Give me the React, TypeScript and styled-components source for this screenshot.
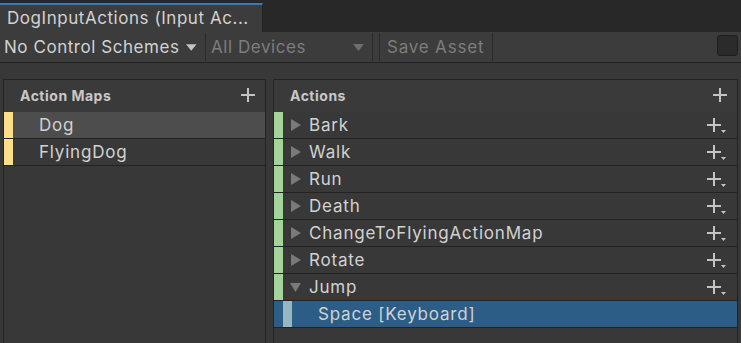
import React from "react";
import styled, { createGlobalStyle } from "styled-components";

const GlobalStyle = createGlobalStyle`
  html, body {
    margin: 0;
    padding: 0;
    background: #383838;
  }
  body {
    font-family: Inter, "Noto Sans", sans-serif;
    color: #d2d2d2;
  }
`;

const actions = [
  { name: "Bark", open: false },
  { name: "Walk", open: false },
  { name: "Run", open: false },
  { name: "Death", open: false },
  { name: "ChangeToFlyingActionMap", open: false },
  { name: "Rotate", open: false },
  { name: "Jump", open: true },
];

const maps = [
  { name: "Dog", selected: true },
  { name: "FlyingDog", selected: false },
];

const Plus = ({ size = 14 }: { size?: number }) => (
  <svg width={size} height={size} viewBox="0 0 14 14">
    <rect x="6" y="0" width="2" height="14" fill="#c4c4c4" />
    <rect x="0" y="6" width="14" height="2" fill="#c4c4c4" />
  </svg>
);

const PlusMore = () => (
  <svg width="20" height="18" viewBox="0 0 20 18">
    <rect x="6" y="1" width="2" height="14" fill="#c4c4c4" />
    <rect x="0" y="7" width="14" height="2" fill="#c4c4c4" />
    <polygon points="14,13 19,13 16.5,16" fill="#c4c4c4" />
  </svg>
);

const Arrow = ({ open }: { open: boolean }) => (
  <svg width="12" height="12" viewBox="0 0 12 12">
    {open ? (
      <polygon points="0,2 11,2 5.5,11" fill="#7a7a7a" />
    ) : (
      <polygon points="1,0 11,6 1,12" fill="#7a7a7a" />
    )}
  </svg>
);

const Caret = ({ dim }: { dim?: boolean }) => (
  <svg width="11" height="7" viewBox="0 0 11 7">
    <polygon points="0,0 11,0 5.5,7" fill={dim ? "#6e6e6e" : "#c4c4c4"} />
  </svg>
);

const App = () => {
  return (
    <>
      <GlobalStyle />
      <Window>
        <TabBar>
          <Tab>DogInputActions (Input Ac...</Tab>
        </TabBar>
        <Toolbar>
          <ToolDrop $width={205}>
            No Control Schemes
            <Caret />
          </ToolDrop>
          <Sep />
          <ToolDrop $width={166} $dim $spread>
            All Devices
            <Caret dim />
          </ToolDrop>
          <Sep />
          <ToolGap />
          <Sep />
          <ToolButton>Save Asset</ToolButton>
          <Sep />
          <Spacer />
          <Check />
        </Toolbar>
        <Content>
          <Panel $width={263}>
            <PanelHeader>
              <span>Action Maps</span>
              <Plus />
            </PanelHeader>
            {maps.map((m) => (
              <Row key={m.name} $selected={m.selected}>
                <Bar $color="#fddf8a" />
                <RowLabel $indent={26}>{m.name}</RowLabel>
              </Row>
            ))}
          </Panel>
          <Panel $width={465}>
            <PanelHeader>
              <span>Actions</span>
              <Plus />
            </PanelHeader>
            {actions.map((a) => (
              <Row key={a.name}>
                <Bar $color="#a5d49a" />
                <Fold>
                  <Arrow open={a.open} />
                </Fold>
                <RowLabel $indent={2}>{a.name}</RowLabel>
                <RowAdd>
                  <PlusMore />
                </RowAdd>
              </Row>
            ))}
            <Row $blue>
              <Bar $color="transparent" />
              <Bar $color="#97b8c0" />
              <RowLabel $indent={26}>Space [Keyboard]</RowLabel>
            </Row>
          </Panel>
        </Content>
      </Window>
    </>
  );
};

const Window = styled.div`
  width: 741px;
  height: 343px;
  overflow: hidden;
  display: flex;
  flex-direction: column;
  background: #383838;
`;

const TabBar = styled.div`
  height: 32px;
  background: #282828;
  display: flex;
  align-items: flex-end;
  flex-shrink: 0;
`;

const Tab = styled.div`
  width: 263px;
  height: 29px;
  box-sizing: border-box;
  border-top: 2px solid #3a79bb;
  border-right: 1px solid #232323;
  background: #3c3c3c;
  font-size: 17px;
  letter-spacing: 0.55px;
  line-height: 26px;
  padding-left: 7px;
  color: #d2d2d2;
  white-space: nowrap;
  overflow: hidden;
`;

const Toolbar = styled.div`
  height: 31px;
  background: #3c3c3c;
  border-bottom: 1px solid #232323;
  box-sizing: border-box;
  display: flex;
  align-items: stretch;
  flex-shrink: 0;
  padding-right: 3px;
`;

const ToolDrop = styled.div<{ $width: number; $dim?: boolean; $spread?: boolean }>`
  width: ${(p) => p.$width}px;
  box-sizing: border-box;
  padding: 0 8px 0 ${(p) => (p.$dim ? 5 : 4)}px;
  display: flex;
  align-items: center;
  justify-content: ${(p) => (p.$spread ? "space-between" : "flex-start")};
  gap: 7px;
  font-size: 17px;
  letter-spacing: 0.55px;
  color: ${(p) => (p.$dim ? "#7d7d7d" : "#d2d2d2")};
  white-space: nowrap;
`;

const Sep = styled.div`
  width: 1px;
  background: #2a2a2a;
  margin: 1px 0;
`;

const ToolGap = styled.div`
  width: 6px;
`;

const ToolButton = styled.div`
  width: 112px;
  box-sizing: border-box;
  padding-left: 7px;
  display: flex;
  align-items: center;
  font-size: 17px;
  letter-spacing: 0.8px;
  color: #7d7d7d;
  white-space: nowrap;
`;

const Spacer = styled.div`
  flex: 1;
`;

const Check = styled.div`
  width: 19px;
  height: 19px;
  margin-top: 3px;
  border: 1px solid #1e1e1e;
  border-radius: 3px;
  background: #2b2b2b;
`;

const Content = styled.div`
  flex: 1;
  display: flex;
  gap: 7px;
  padding: 16px 3px 0;
`;

const Panel = styled.div<{ $width: number }>`
  width: ${(p) => p.$width}px;
  box-sizing: border-box;
  border: 1px solid #232323;
  border-bottom: none;
  background: #383838;
  display: flex;
  flex-direction: column;
`;

const PanelHeader = styled.div`
  height: 30px;
  flex-shrink: 0;
  display: flex;
  align-items: center;
  justify-content: space-between;
  padding: 0 10px 2px 16px;
  font-size: 14px;
  letter-spacing: 0.5px;
  font-weight: 700;
  color: #c8c8c8;
  background: #3a3a3a;
`;

const Row = styled.div<{ $selected?: boolean; $blue?: boolean }>`
  height: 27px;
  box-sizing: border-box;
  flex-shrink: 0;
  border-bottom: 1px solid #232323;
  display: flex;
  align-items: stretch;
  background: ${(p) => (p.$blue ? "#2c5d87" : p.$selected ? "#4d4d4d" : "#383838")};
`;

const Bar = styled.div<{ $color: string }>`
  width: 9px;
  flex-shrink: 0;
  background: ${(p) => p.$color};
`;

const Fold = styled.div`
  width: 24px;
  padding: 7px 0 0 7px;
  display: flex;
  align-items: flex-start;
  box-sizing: border-box;
  flex-shrink: 0;
`;

const RowLabel = styled.div<{ $indent: number }>`
  flex: 1;
  padding-left: ${(p) => p.$indent}px;
  font-size: 17px;
  letter-spacing: 0.8px;
  line-height: 26px;
  color: #d2d2d2;
  white-space: nowrap;
`;

const RowAdd = styled.div`
  width: 30px;
  display: flex;
  align-items: center;
  padding-top: 1px;
`;

export default App;
